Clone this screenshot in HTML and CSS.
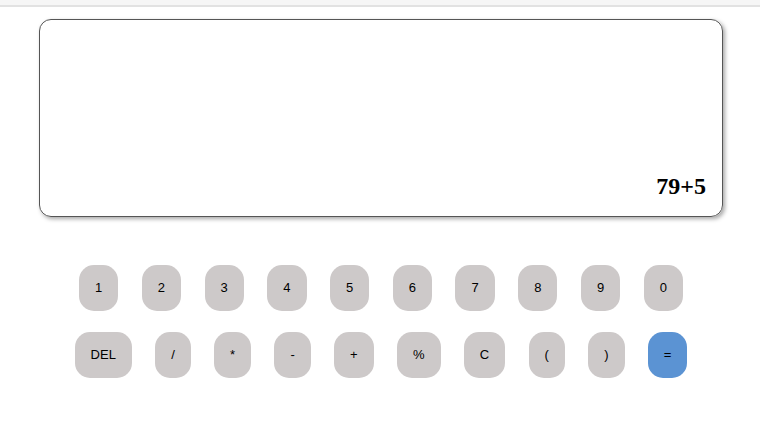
FILE: index.html
```html
<!DOCTYPE html>
<html lang="en">
<head>
    <meta charset="UTF-8">
    <meta name="viewport" content="width=device-width, initial-scale=1.0">
    <title>Calculator</title>
    <link rel="stylesheet" href="styles.css">
</head>
<body>
    <div class="topbar"></div>
    <div class="calculator">
        <div class="display" id="display">79+5</div>
        <div class="keys">
            <button>1</button>
            <button>2</button>
            <button>3</button>
            <button>4</button>
            <button>5</button>
            <button>6</button>
            <button>7</button>
            <button>8</button>
            <button>9</button>
            <button>0</button>
        </div>
        <div class="keys">
            <button>DEL</button>
            <button>/</button>
            <button>*</button>
            <button>-</button>
            <button>+</button>
            <button>%</button>
            <button>C</button>
            <button>(</button>
            <button>)</button>
            <button class="equal">=</button>
        </div>
    </div>
</body>
</html>
```

FILE: styles.css
```css
body {
    margin: 0;
    padding: 0;
    background-color: #fff;
    font-family: 'Liberation Sans', Arial, sans-serif;
}

.topbar {
    height: 5px;
    background-color: #f6f6f6;
    border-bottom: 2px solid #e2e2e2;
}

.calculator {
    display: flex;
    flex-direction: column;
    align-items: center;
}

.display {
    box-sizing: border-box;
    width: 684px;
    height: 198px;
    margin: 12px 0 0 2px;
    padding: 0 16px 16px 0;
    border: 1px solid #555;
    border-radius: 12px;
    box-shadow: 2px 2px 4px rgba(0, 0, 0, 0.35);
    display: flex;
    align-items: flex-end;
    justify-content: flex-end;
    font-family: 'Liberation Serif', 'Times New Roman', serif;
    font-weight: bold;
    font-size: 24px;
    color: #000;
}

.keys {
    display: flex;
    justify-content: center;
    gap: 23.3px;
    margin-left: 2px;
}

.keys:nth-child(2) {
    margin-top: 48px;
    gap: 23.5px;
}

.keys:nth-child(3) {
    margin-top: 21px;
}

button {
    font-family: 'Liberation Sans', Arial, sans-serif;
    font-size: 13px;
    line-height: 14px;
    padding: 16px;
    min-width: 35px;
    border: none;
    border-radius: 15px;
    background-color: #cdc9c9;
    color: #000;
    cursor: pointer;
}

.equal {
    background-color: #5b93d3;
}
```
